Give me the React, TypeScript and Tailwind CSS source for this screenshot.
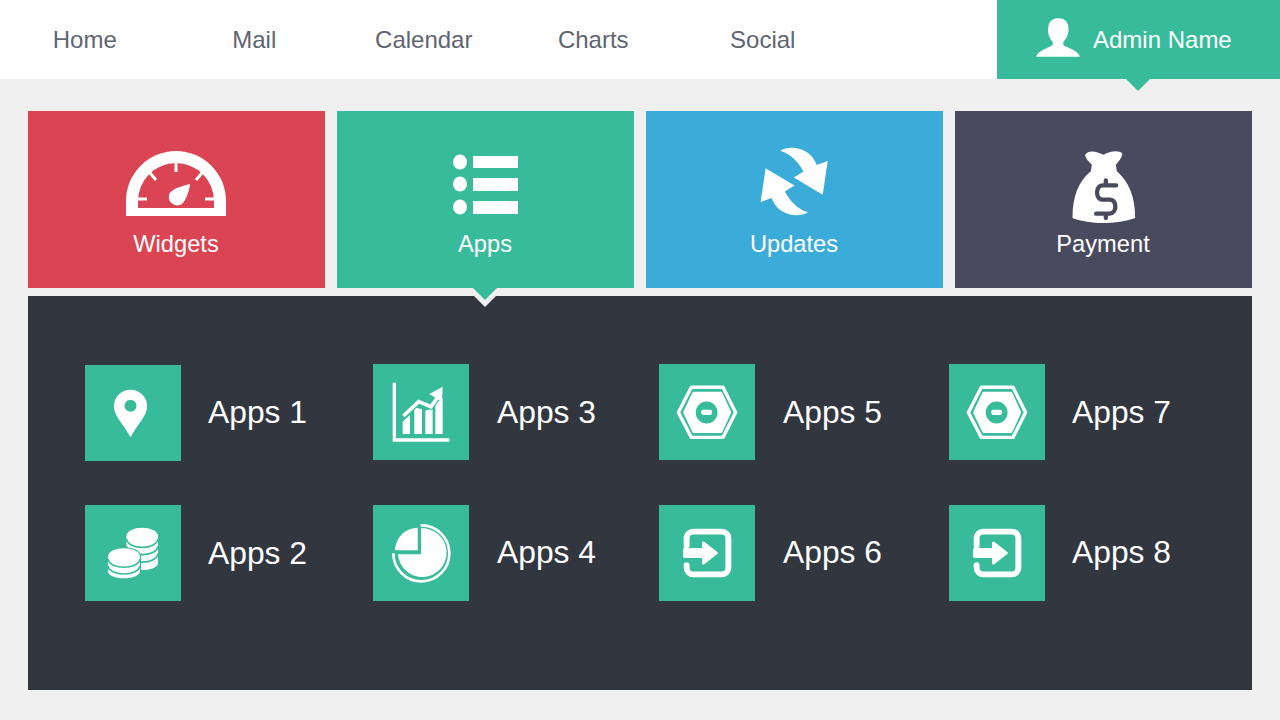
import type { ReactNode } from 'react';

const navItems = ['Home', 'Mail', 'Calendar', 'Charts', 'Social'];

function GaugeIcon() {
  return (
    <svg className="mb-[4px] mr-[2px]" width="100" height="65" viewBox="0 0 100 65" fill="white">
      <path
        fillRule="evenodd"
        d="M0 65V50A50 50 0 0 1 100 50V65ZM12 57H88V50A38 38 0 0 0 12 50Z"
      />
      <g stroke="white" fill="none" strokeWidth="3">
        <path d="M50 12V21" />
        <path d="M24 22L30 29M76 22L70 29" />
        <path d="M12 48H21M79 48H88" />
      </g>
      <path d="M64 33C63 41 60 49 56 53A8.500 8.500 0 0 1 44 41.500C49 37 56 35 64 33Z" />
    </svg>
  );
}

function ListIcon() {
  return (
    <svg className="mb-[2px]" width="67" height="62" viewBox="0 0 67 62" fill="white">
      <ellipse cx="8" cy="8" rx="7" ry="7.500" />
      <ellipse cx="8" cy="30" rx="7" ry="7.500" />
      <ellipse cx="8" cy="53" rx="7" ry="7.500" />
      <rect x="21" y="2" width="45" height="12" />
      <rect x="21" y="24" width="45" height="13" />
      <rect x="21" y="47" width="45" height="13" />
    </svg>
  );
}

function RefreshIcon() {
  const arrow =
    'M122 62C150 44 212 50 232 105L265 93L250 195L163 143L192 125C178 98 155 72 122 62Z';
  return (
    <svg className="mb-[8px]" width="77" height="73" viewBox="50 45 230 220" fill="white">
      <path d={arrow} />
      <path d={arrow} transform="rotate(180 164 155)" />
    </svg>
  );
}

function BagIcon() {
  return (
    <svg width="67" height="75" viewBox="60 25 200 225" fill="white">
      <path d="M105 45C115 30 140 35 160 45C180 35 205 30 217 42C215 55 205 65 197 75L200 95C235 125 255 170 255 235C200 255 120 255 67 235C67 170 85 125 122 95L125 75C115 65 105 55 105 45Z" />
      <path
        d="M198 137H158C135 137 135 180 158 180H178C203 180 200 222 178 222H138M167 122V137M167 222V235"
        fill="none"
        stroke="#4a4a5f"
        strokeWidth="13"
        strokeLinecap="round"
      />
    </svg>
  );
}

function UserIcon() {
  return (
    <svg className="mb-[4px]" width="44" height="39" viewBox="18 25 132 115" fill="white">
      <path d="M18 140C25 120 55 115 68 105L68 95C58 85 52 70 55 50C58 30 72 25 85 25C100 25 112 32 115 50C118 70 110 85 100 95L100 105C115 115 143 120 150 140Z" />
    </svg>
  );
}

function PinIcon() {
  return (
    <svg className="mr-[5px]" width="35" height="49" viewBox="130 115 104 147" fill="white">
      <path
        fillRule="evenodd"
        d="M182 260C160 220 132 195 132 167A50 50 0 0 1 232 167C232 195 204 220 182 260ZM182 147A18 18 0 1 0 182 183A18 18 0 1 0 182 147Z"
      />
    </svg>
  );
}

function ChartIcon() {
  return (
    <svg width="58" height="60" viewBox="38 36 174 180" fill="white">
      <path d="M40 38H50V205H210V215H40Z" />
      <path d="M70 155L92 135V192H70ZM105 112L128 118V192H105ZM138 122L160 115V192H138ZM168 100L190 85V192H168Z" />
      <path d="M72 138L118 95L155 110L178 78" fill="none" stroke="#38bb9a" strokeWidth="18" />
      <path d="M72 138L118 95L155 110L178 78" fill="none" stroke="white" strokeWidth="11" />
      <path d="M150 72L190 50L188 95Z" />
    </svg>
  );
}

function CoinsIcon() {
  return (
    <svg width="52" height="52" viewBox="110 533 155 155" fill="white">
      <path d="M168 560V640C168 668 262 668 262 640V560Z" />
      <ellipse cx="215" cy="560" rx="47" ry="25" />
      <g fill="none" stroke="#38bb9a" strokeWidth="5">
        <path d="M168 568C172 602 258 602 262 568" />
        <path d="M168 590C172 624 258 624 262 590" />
        <path d="M168 612C172 646 258 646 262 612" />
      </g>
      <path d="M113 621V665C113 693 208 693 208 665V621Z" stroke="#38bb9a" strokeWidth="7" />
      <ellipse cx="160.500" cy="621" rx="47.500" ry="25" stroke="#38bb9a" strokeWidth="7" />
      <path d="M113 621V665C113 693 208 693 208 665V621Z" />
      <ellipse cx="160.500" cy="621" rx="47.500" ry="25" />
      <g fill="none" stroke="#38bb9a" strokeWidth="5">
        <path d="M113 629C117 661 204 661 208 629" />
        <path d="M113 649C117 681 204 681 208 649" />
      </g>
    </svg>
  );
}

function PieIcon() {
  return (
    <svg width="59" height="59" viewBox="966 518 177 177" fill="white">
      <path d="M1052 522A84 84 0 1 1 970 606" fill="none" stroke="white" strokeWidth="8" />
      <path d="M1043 597V529A69 69 0 0 0 975 597Z" />
      <path d="M1053 531A73 73 0 1 1 984 609H1053Z" />
    </svg>
  );
}

function HexIcon() {
  return (
    <svg width="62" height="55" viewBox="20 32 182 160" fill="white">
      <path
        d="M27 112L65 38H158L195 112L158 185H65Z"
        fill="none"
        stroke="white"
        strokeWidth="10"
        strokeLinejoin="round"
      />
      <path
        d="M45 112L72 55H152L178 112L152 168H72Z"
        stroke="white"
        strokeWidth="8"
        strokeLinejoin="round"
      />
      <circle cx="110" cy="112" r="32" fill="#38bb9a" />
      <rect x="94" y="104" width="32" height="15" rx="6" />
    </svg>
  );
}

function EnterIcon() {
  return (
    <svg width="49" height="50" viewBox="98 533 149 152" fill="white">
      <path
        d="M109 586V564A20 20 0 0 1 129 544H216A20 20 0 0 1 236 564V654A20 20 0 0 1 216 674H129A20 20 0 0 1 109 654V646"
        fill="none"
        stroke="white"
        strokeWidth="18"
        strokeLinecap="round"
      />
      <path
        d="M102 598H160V578L200 609L160 640V620H102Z"
        stroke="white"
        strokeWidth="8"
        strokeLinejoin="round"
      />
    </svg>
  );
}

function Tile({
  label,
  color,
  icon,
  active,
}: {
  label: string;
  color: string;
  icon: ReactNode;
  active?: boolean;
}) {
  return (
    <div className={`relative flex h-[177px] flex-col items-center pt-[30px] ${color}`}>
      <div className="flex h-[89px] items-center justify-center">{icon}</div>
      <span className="mr-px text-[23.700px] leading-7 text-white">{label}</span>
      {active && (
        <svg
          className="absolute left-1/2 top-full z-10 -ml-px -translate-x-1/2"
          width="26"
          height="19"
          viewBox="0 0 26 19"
        >
          <path d="M2 8H24L13 19Z" fill="#f0f0f0" />
          <path d="M1 0H25L13 12Z" fill="#38bb9a" />
        </svg>
      )}
    </div>
  );
}

function AppItem({
  label,
  icon,
  className = 'gap-[27px]',
  labelClassName = 'translate-y-px',
}: {
  label: string;
  icon: ReactNode;
  className?: string;
  labelClassName?: string;
}) {
  return (
    <div className={`flex items-center ${className}`}>
      <div className="flex size-24 items-center justify-center bg-[#38bb9a]">{icon}</div>
      <span className={`text-[31.800px] leading-none text-white ${labelClassName}`}>{label}</span>
    </div>
  );
}

export default function App() {
  return (
    <div className="h-[720px] w-[1280px] overflow-hidden bg-[#f0f0f0] font-['Liberation_Sans',Arial,sans-serif]">
      <header className="flex h-[79px] bg-white">
        {navItems.map((item) => (
          <div
            key={item}
            className="flex w-[169.500px] items-center justify-center text-[24px] text-[#5f6570]"
          >
            {item}
          </div>
        ))}
        <div className="relative ml-auto flex w-[283px] items-center gap-[13px] bg-[#38bb9a] pl-[39px] text-[24px] text-white">
          <UserIcon />
          <span>Admin Name</span>
          <svg
            className="absolute left-[129px] top-full"
            width="24"
            height="12"
            viewBox="0 0 24 12"
          >
            <path d="M0 0H24L12 12Z" fill="#38bb9a" />
          </svg>
        </div>
      </header>

      <main className="mx-[28px] mt-[32px]">
        <div className="grid grid-cols-4 gap-3">
          <Tile label="Widgets" color="bg-[#da4453]" icon={<GaugeIcon />} />
          <Tile label="Apps" color="bg-[#38bb9a]" icon={<ListIcon />} active />
          <Tile label="Updates" color="bg-[#3bacda]" icon={<RefreshIcon />} />
          <Tile label="Payment" color="bg-[#4a4a5f]" icon={<BagIcon />} />
        </div>

        <section className="mt-2 h-[394px] bg-[#32363f] pl-[57px] pt-[68px]">
          <div className="grid grid-cols-[288px_286px_290px_auto] gap-y-[45px]">
            <AppItem label="Apps 1" icon={<PinIcon />} className="translate-y-px gap-[27px]" labelClassName="" />
            <AppItem label="Apps 3" icon={<ChartIcon />} className="gap-[28px]" />
            <AppItem label="Apps 5" icon={<HexIcon />} className="gap-[28px]" />
            <AppItem label="Apps 7" icon={<HexIcon />} />
            <AppItem label="Apps 2" icon={<CoinsIcon />} />
            <AppItem label="Apps 4" icon={<PieIcon />} className="gap-[28px]" labelClassName="" />
            <AppItem label="Apps 6" icon={<EnterIcon />} className="gap-[28px]" labelClassName="" />
            <AppItem label="Apps 8" icon={<EnterIcon />} labelClassName="" />
          </div>
        </section>
      </main>
    </div>
  );
}
